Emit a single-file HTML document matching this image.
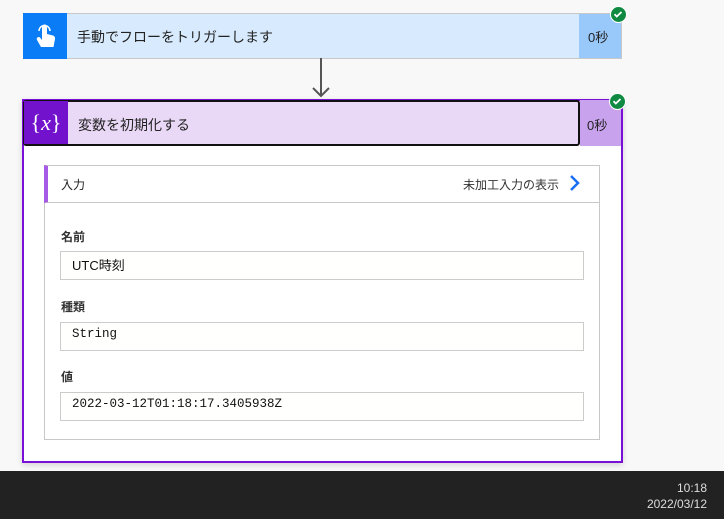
<!DOCTYPE html>
<html><head><meta charset="utf-8"><style>
*{box-sizing:border-box;margin:0;padding:0}
body{width:724px;height:519px;background:#f8f8f8;position:relative;overflow:hidden;font-family:"Liberation Sans","Noto Sans CJK JP",sans-serif;font-size:13px;color:#222}
.abs{position:absolute}
.chk{position:absolute;width:17px;height:17px;border-radius:50%;background:#108a42;border:1.5px solid #fff}
.lbl{position:absolute;left:61px;font-size:12px;font-weight:bold;color:#333}
.box{position:absolute;left:60px;width:524px;height:29px;border:1px solid #ccc;background:#fffffd;font-family:"Liberation Mono","Noto Sans CJK JP",monospace;font-size:12.5px;padding:4px 0 0 11px;color:#111}
</style></head><body>
<div class="abs" style="left:23px;top:13px;width:599px;height:46px;border:1px solid #c8c8c8;background:#d8eafd"></div>
<div class="abs" style="left:23px;top:13px;width:44px;height:46px;background:#0a7cf5"></div>
<svg class="abs" style="left:34px;top:22px" width="24" height="28" viewBox="0 0 24 28"><path d="M8 14V5a2.5 2.5 0 0 1 5 0v7l6 1.5a3 3 0 0 1 2 3.5L19.5 25H7L3 18a2 2 0 0 1 3-2.5L8 18z" fill="#fff"/><path d="M5 9a5.5 5.5 0 1 1 11 0" stroke="#fff" stroke-width="1.5" fill="none"/></svg>
<div class="abs" style="left:77px;top:27px;font-size:14px">手動でフローをトリガーします</div>
<div class="abs" style="left:579px;top:14px;width:42px;height:44px;background:#99c8fb"></div>
<div class="abs" style="left:588px;top:27px;font-size:13px">0秒</div>
<div class="chk" style="left:610px;top:6px"><svg width="14" height="14" viewBox="0 0 14 14"><path d="M3.5 7.2l2.3 2.3L10.5 5" stroke="#fff" stroke-width="1.8" fill="none"/></svg></div>
<svg class="abs" style="left:310px;top:58px" width="22" height="42"><path d="M11 0V38M3 30l8 8 8-8" stroke="#555" stroke-width="2" fill="none"/></svg>
<div class="abs" style="left:22px;top:99px;width:601px;height:364px;border:2px solid #7a10d8;background:#fff;box-shadow:0 2px 6px rgba(0,0,0,.15)"></div>
<div class="abs" style="left:23px;top:100px;width:557px;height:46px;border:2px solid #111;border-radius:3px;background:#ead9f6"></div>
<div class="abs" style="left:24px;top:101px;width:44px;height:43px;background:#7212cc;color:#fff;font-family:'Liberation Serif',serif;font-size:22px;line-height:43px;text-align:center">{<i>x</i>}</div>
<div class="abs" style="left:78px;top:115px;font-size:14px">変数を初期化する</div>
<div class="abs" style="left:580px;top:100px;width:41px;height:46px;background:#c9a2ee"></div>
<div class="abs" style="left:587px;top:115px">0秒</div>
<div class="chk" style="left:609px;top:93px"><svg width="14" height="14" viewBox="0 0 14 14"><path d="M3.5 7.2l2.3 2.3L10.5 5" stroke="#fff" stroke-width="1.8" fill="none"/></svg></div>
<div class="abs" style="left:44px;top:165px;width:556px;height:275px;border:1px solid #c8c8c8"></div>
<div class="abs" style="left:44px;top:165px;width:556px;height:38px;border:1px solid #c8c8c8;border-left:4px solid #a55be6"></div>
<div class="abs" style="left:61px;top:176px;font-size:12px">入力</div>
<div class="abs" style="left:463px;top:176px;font-size:12px;color:#333">未加工入力の表示</div>
<svg class="abs" style="left:569px;top:175px" width="12" height="16"><path d="M2 1l7 7-7 7" stroke="#1a6ef5" stroke-width="2.5" fill="none"/></svg>
<div class="lbl" style="top:228px">名前</div>
<div class="box" style="top:251px;font-family:'Liberation Sans','Noto Sans CJK JP',sans-serif;font-size:13px;padding-top:3px">UTC時刻</div>
<div class="lbl" style="top:298px">種類</div>
<div class="box" style="top:322px">String</div>
<div class="lbl" style="top:368px">値</div>
<div class="box" style="top:392px">2022-03-12T01:18:17.3405938Z</div>
<div class="abs" style="left:0;top:471px;width:724px;height:48px;background:#222"></div>
<div class="abs" style="right:17px;top:480px;font-size:12px;color:#ddd;text-align:right;line-height:16px">10:18<br>2022/03/12</div>
</body></html>
